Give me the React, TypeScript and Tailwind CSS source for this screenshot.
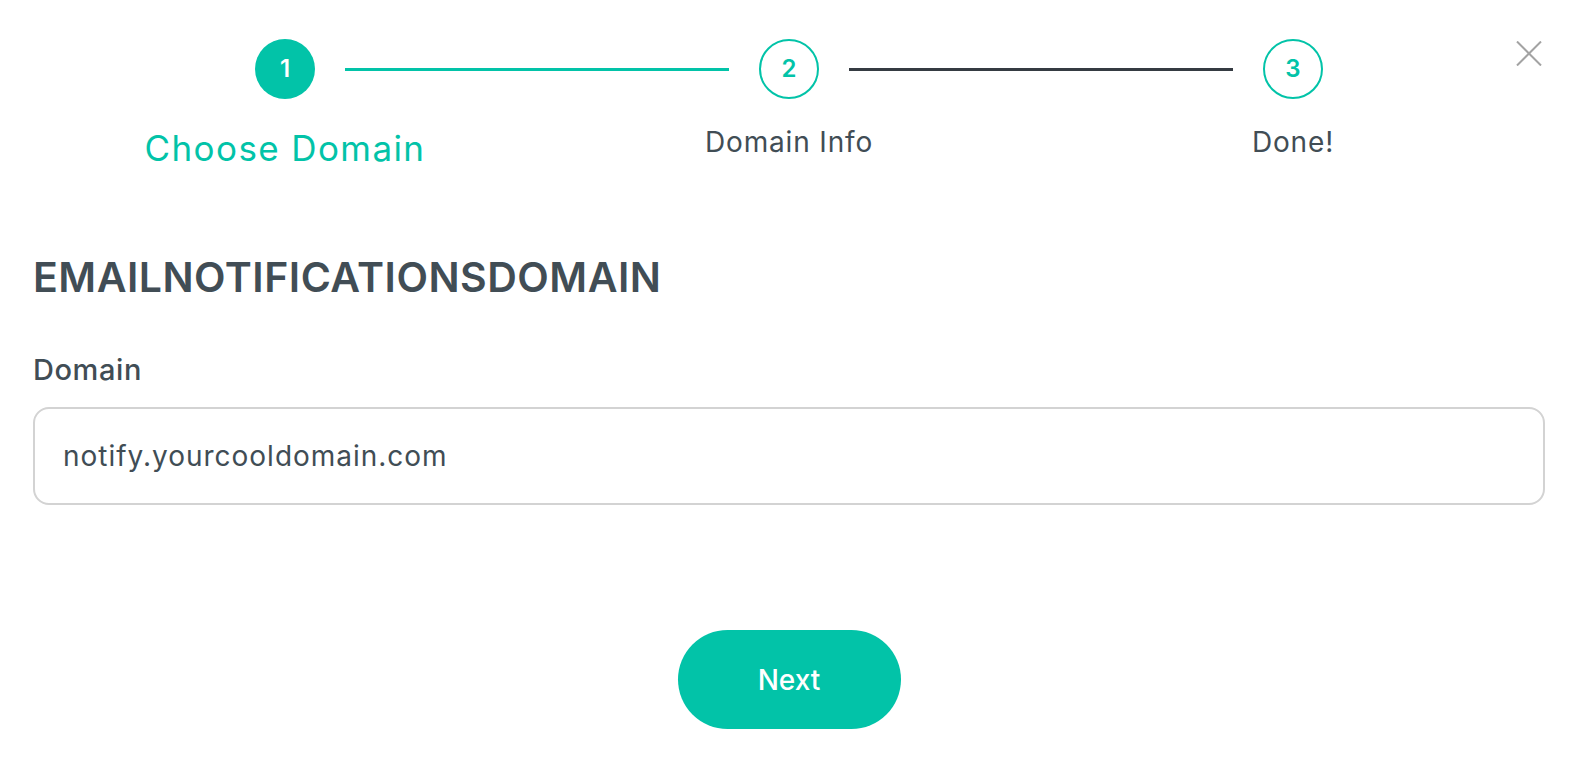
const steps = [
  { n: 1, label: 'Choose Domain' },
  { n: 2, label: 'Domain Info' },
  { n: 3, label: 'Done!' },
];

const current = 1;

export default function App() {
  return (
    <div className="relative min-h-screen bg-white px-[33px] pt-[39px] font-['Inter',sans-serif] text-[#414d55]">
      {/* Close */}
      <button className="absolute right-[36px] top-[41px] text-[#a3a3a3]">
        <svg width="26" height="25" viewBox="0 0 26 25" fill="none" stroke="currentColor" strokeWidth="2">
          <path d="M1 0.5 L25 24.5 M25 0.5 L1 24.5" />
        </svg>
      </button>

      {/* Stepper */}
      <div className="grid grid-cols-3">
        {steps.map((step, i) => {
          const done = step.n <= current;
          return (
            <div key={step.n} className="flex flex-col items-center">
              <div className="flex w-full items-center">
                <div className="flex-1 pr-[30px]">
                  {i > 0 && (
                    <div className={i === 1 ? 'h-[3px] bg-[#02c3a8]' : 'h-[3px] bg-[#353b42]'} />
                  )}
                </div>
                <div
                  className={
                    done
                      ? 'flex h-[60px] w-[60px] items-center justify-center rounded-full bg-[#02c3a8] text-[24px] font-semibold text-white'
                      : 'flex h-[60px] w-[60px] items-center justify-center rounded-full border-2 border-[#02c3a8] text-[24px] font-semibold text-[#02c3a8]'
                  }
                >
                  {step.n}
                </div>
                <div className="flex-1 pl-[30px]">
                  {i < steps.length - 1 && (
                    <div className={i === 0 ? 'h-[3px] bg-[#02c3a8]' : 'h-[3px] bg-[#353b42]'} />
                  )}
                </div>
              </div>
              <p
                className={
                  done
                    ? 'mt-[29px] text-[35px] leading-[40px] tracking-[0.04em] text-[#02c3a8]'
                    : 'mt-[27px] text-[28px] leading-[32px] tracking-[0.03em] text-[#414d55]'
                }
              >
                {step.label}
              </p>
            </div>
          );
        })}
      </div>

      {/* Heading */}
      <h1 className="mt-[85px] text-[41px] font-semibold leading-[48px] tracking-[0.012em] text-[#414d55]">
        EMAILNOTIFICATIONSDOMAIN
      </h1>

      {/* Form */}
      <div className="mt-[51px]">
        <label className="block text-[29px] font-medium leading-[36px] tracking-[0.02em] text-[#414d55]">
          Domain
        </label>
        <input
          defaultValue="notify.yourcooldomain.com"
          className="mt-[19px] h-[98px] w-full rounded-[16px] border-2 border-[#d3d3d3] px-[28px] text-[28px] tracking-[0.035em] text-[#414d55] outline-none"
        />
      </div>

      <div className="mt-[125px] flex justify-center">
        <button className="h-[99px] w-[223px] rounded-full bg-[#02c3a8] text-[28px] font-medium text-white">
          Next
        </button>
      </div>
    </div>
  );
}
